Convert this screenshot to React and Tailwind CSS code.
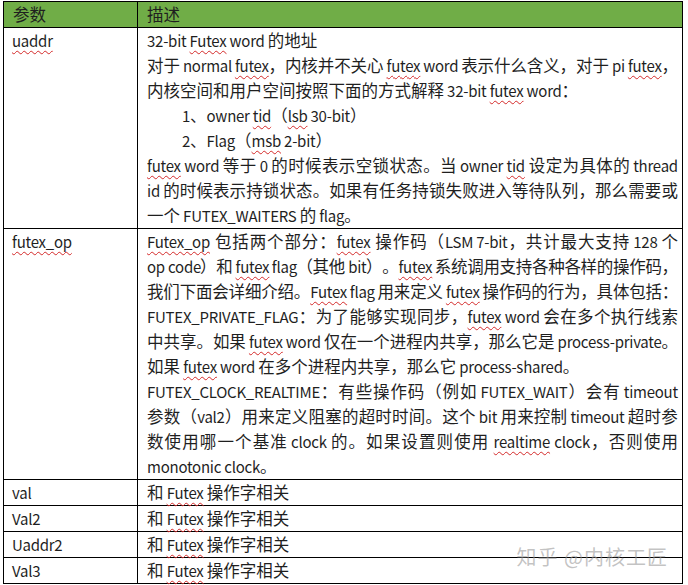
import React from 'react';

const font = { fontFamily: '"Noto Sans CJK SC", "Noto Sans", sans-serif' };
const sq = 'underline decoration-wavy decoration-[#d42a2a] decoration-1 underline-offset-[3px]';
const latin = 'text-[15px] tracking-[-0.25px]';
const CJK_RUN = /[\u3000-\u303f\u4e00-\u9fff\uff00-\uffef]|[^\u3000-\u303f\u4e00-\u9fff\uff00-\uffef]+/g;
const isCjk = (t) => /[\u3000-\u303f\u4e00-\u9fff\uff00-\uffef]/.test(t);

// '~word~' marks a word with the red spell-check squiggle
const tokenize = (text) => {
  const out = [];
  text.split('~').forEach((part, i) => {
    (part.match(CJK_RUN) || []).forEach((t) => out.push({ t, sq: i % 2 === 1, cjk: isCjk(t) }));
  });
  return out;
};

const Tok = ({ tok, shrink }) => (
  <span className={`${tok.sq ? sq : ''} ${tok.cjk ? '' : latin} ${shrink ? 'min-w-0' : ''}`}>{tok.t}</span>
);

// justified lines: each CJK glyph / latin run is a flex item spread across the cell
const Line = ({ t, j, indent }) => {
  const tokens = tokenize(t);
  if (j)
    return (
      <div className="flex items-baseline justify-between whitespace-pre">
        {tokens.map((tok, i) => (
          <Tok key={i} tok={tok} shrink />
        ))}
      </div>
    );
  return (
    <div className={`whitespace-pre ${indent ? 'pl-[35px]' : ''}`}>
      {tokens.map((tok, i) => (
        <Tok key={i} tok={tok} />
      ))}
    </div>
  );
};

const uaddrLines = [
  { t: '32-bit ~Futex~ word 的地址' },
  { t: '对于 normal ~futex~，内核并不关心 ~futex~ word 表示什么含义，对于 pi ~futex~，', j: true },
  { t: '内核空间和用户空间按照下面的方式解释 32-bit ~futex~ word：' },
  { t: '1、owner ~tid~（~lsb~ 30-bit）', indent: true },
  { t: '2、Flag（~msb~ 2-bit）', indent: true },
  { t: '~futex~ word 等于 0 的时候表示空锁状态。当 owner ~tid~ 设定为具体的 thread', j: true },
  { t: 'id 的时候表示持锁状态。如果有任务持锁失败进入等待队列，那么需要或', j: true },
  { t: '一个 FUTEX_WAITERS 的 flag。' },
];

const futexOpLines = [
  { t: '~Futex_op~ 包括两个部分：~futex~ 操作码（LSM 7-bit，共计最大支持 128 个', j: true },
  { t: 'op code）和 ~futex~ flag（其他 bit）。~futex~ 系统调用支持各种各样的操作码，', j: true },
  { t: '我们下面会详细介绍。~Futex~ flag 用来定义 ~futex~ 操作码的行为，具体包括：', j: true },
  { t: 'FUTEX_PRIVATE_FLAG：为了能够实现同步，~futex~ word 会在多个执行线索', j: true },
  { t: '中共享。如果 ~futex~ word 仅在一个进程内共享，那么它是 process-private。', j: true },
  { t: '如果 ~futex~ word 在多个进程内共享，那么它 process-shared。' },
  { t: 'FUTEX_CLOCK_REALTIME：有些操作码（例如 FUTEX_WAIT）会有 timeout', j: true },
  { t: '参数（val2）用来定义阻塞的超时时间。这个 bit 用来控制 timeout 超时参', j: true },
  { t: '数使用哪一个基准 clock 的。如果设置则使用 ~realtime~ clock，否则使用', j: true },
  { t: 'monotonic clock。' },
];

const rows = [
  { name: '~uaddr~', lines: uaddrLines },
  { name: '~futex_op~', lines: futexOpLines },
  { name: 'val', lines: [{ t: '和 ~Futex~ 操作字相关' }] },
  { name: 'Val2', lines: [{ t: '和 ~Futex~ 操作字相关' }] },
  { name: 'Uaddr2', lines: [{ t: '和 ~Futex~ 操作字相关' }] },
  { name: 'Val3', lines: [{ t: '和 ~Futex~ 操作字相关' }] },
];

export default function App() {
  return (
    <div className="relative w-[688px] h-[585px] bg-white text-[#1f1f1f] text-[16.5px] leading-[25px]" style={font}>
      <table className="ml-[3px] mt-px w-[679px] table-fixed border-collapse">
        <colgroup>
          <col className="w-[134px]" />
          <col className="w-[545px]" />
        </colgroup>
        <thead>
          <tr className="bg-[#70ad47] h-[26px]">
            <th className="border border-black px-[9px] py-0 text-left font-normal">参数</th>
            <th className="border border-black pl-[9px] pr-[4px] py-0 text-left font-normal">描述</th>
          </tr>
        </thead>
        <tbody>
          {rows.map((r, i) => (
            <tr key={i}>
              <td className="border border-black px-[8px] py-0 align-top">
                <Line t={r.name} />
              </td>
              <td className="border border-black pl-[9px] pr-[4px] py-0 align-top">
                {r.lines.map((l, k) => (
                  <Line key={k} {...l} />
                ))}
              </td>
            </tr>
          ))}
        </tbody>
      </table>
      <div className="absolute right-[20px] bottom-[19px] text-[20px] leading-none tracking-[1px] text-[#9a9a9a]/60">
        知乎 @内核工匠
      </div>
    </div>
  );
}
